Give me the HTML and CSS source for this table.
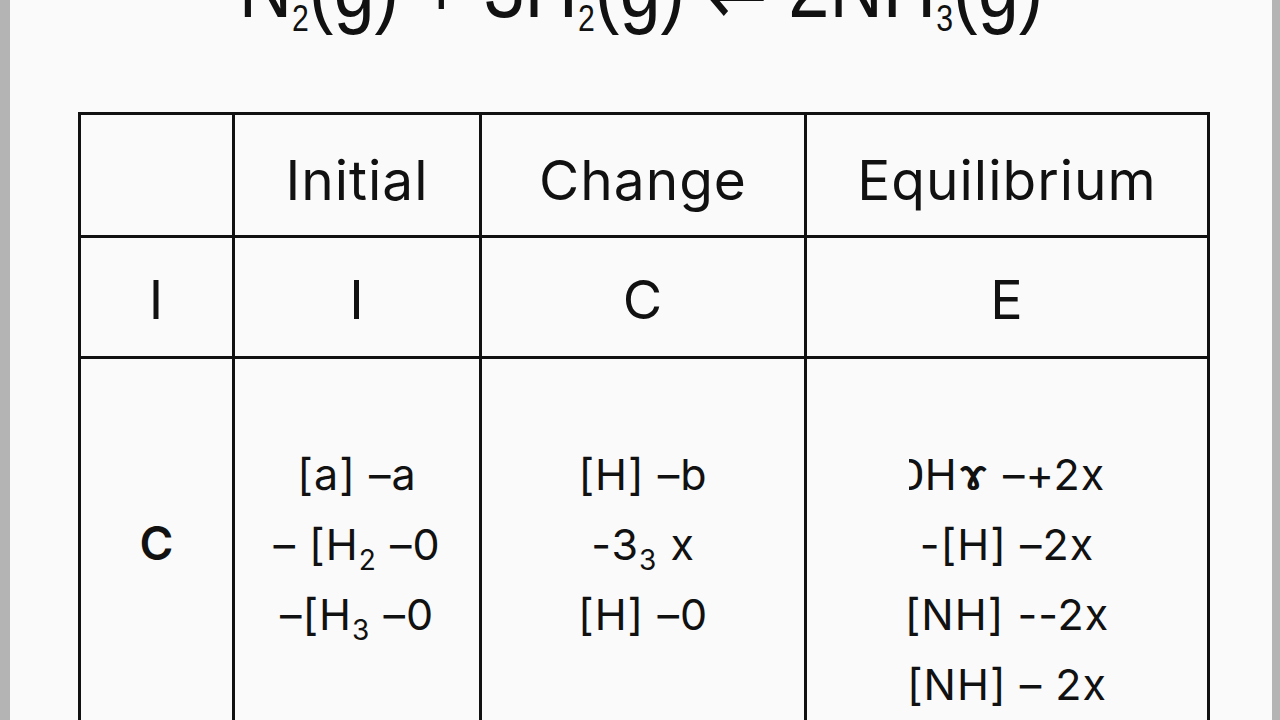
FILE: index.html
```html
<!DOCTYPE html>
<html>
<head>
<meta charset="utf-8">
<link rel="stylesheet" href="styles.css">
</head>
<body>
<div class="page">
  <div class="title"><span class="eq">N<sub>2</sub>(g) + 3H<sub>2</sub>(g) ⇌ 2NH<sub>3</sub>(g)</span></div>
  <table class="ice">
    <colgroup>
      <col class="c1"><col class="c2"><col class="c3"><col class="c4">
    </colgroup>
    <tr class="r1">
      <td></td>
      <td>Initial</td>
      <td>Change</td>
      <td>Equilibrium</td>
    </tr>
    <tr class="r2">
      <td>I</td>
      <td>I</td>
      <td>C</td>
      <td>E</td>
    </tr>
    <tr class="r3">
      <td class="label">C</td>
      <td class="stack">
        <div>[a] –a</div>
        <div>– [H<sub>2</sub> –0</div>
        <div>–[H<sub>3</sub> –0</div>
      </td>
      <td class="stack">
        <div>[H] –b</div>
        <div>-3<sub>3</sub> x</div>
        <div>[H] –0</div>
      </td>
      <td class="stack">
        <div><span class="clip">Ↄ</span>Hɤ –+2x</div>
        <div>-[H] –2x</div>
        <div>[NH] --2x</div>
        <div>[NH] – 2x</div>
      </td>
    </tr>
  </table>
</div>
</body>
</html>
```
FILE: styles.css
```css
html, body {
  margin: 0;
  padding: 0;
  background: #b4b4b4;
  height: 720px;
  overflow: hidden;
}
.page {
  margin: 0 8px 0 10px;
  height: 720px;
  background: #fafafa;
  overflow: hidden;
}
.title {
  display: flex;
  justify-content: center;
  margin-top: -55px;
  height: 93px;
  font-family: "Liberation Sans", Arial, sans-serif;
  font-size: 88px;
  line-height: 84px;
  color: #111;
}
.eq {
  display: inline-block;
  transform: scaleX(0.84);
  white-space: nowrap;
}
.title sub {
  font-size: 36px;
  vertical-align: -14px;
  line-height: 0;
}
.ice {
  margin: 74px 0 0 68px;
  border-collapse: collapse;
  table-layout: fixed;
  width: 1129px;
  font-family: Inter, "Noto Sans", sans-serif;
  color: #111;
}
.c1 { width: 154px; }
.c2 { width: 247px; }
.c3 { width: 325px; }
.c4 { width: 403px; }
.ice td {
  border: 3px solid #111;
  text-align: center;
  padding: 0;
}
.r1 td, .r2 td {
  letter-spacing: 1px;
  line-height: 60px;
}
.r1 td {
  height: 110px;
  font-size: 55px;
  padding-top: 10px;
}
.r2 td {
  height: 112px;
  font-size: 54px;
  padding-top: 6px;
}
.r3 td {
  height: 400px;
  vertical-align: top;
}
.r3 .label {
  vertical-align: top;
  padding-top: 156px;
  font-size: 46px;
  font-weight: 600;
}
.stack {
  padding-top: 80px !important;
  font-size: 43px;
  line-height: 70px;
  letter-spacing: 1px;
}
.stack sub {
  font-size: 28px;
  line-height: 0;
  vertical-align: -10px;
}
.clip {
  display: inline-block;
  width: 16px;
  overflow: hidden;
  vertical-align: top;
  text-align: right;
  direction: rtl;
}
```
